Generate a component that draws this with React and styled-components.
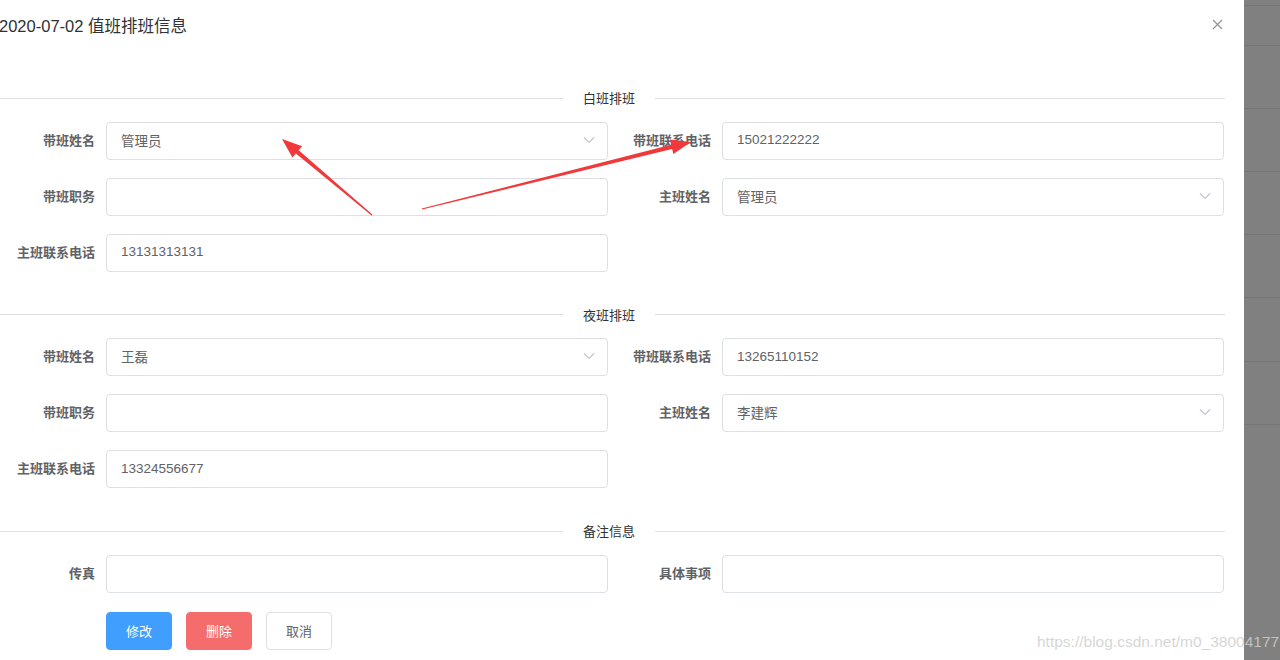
import React from "react";
import styled, { createGlobalStyle } from "styled-components";

const Global = createGlobalStyle`
  html, body { margin: 0; padding: 0; background: #fff; }
  body { font-family: "Liberation Sans", "Noto Sans CJK SC", sans-serif; }
  * { box-sizing: border-box; }
`;

const Page = styled.div`
  position: relative;
  width: 1280px;
  height: 660px;
  overflow: hidden;
  display: flex;
`;

const Dialog = styled.div`
  width: 1244px;
  flex: none;
  background: #fff;
  padding: 0 19px 0 0;
`;

const Header = styled.div`
  display: flex;
  align-items: center;
  justify-content: space-between;
  padding: 14px 0 0 0;
  margin-left: -2px;
  height: 38px;
`;

const Title = styled.div`
  font-size: 16.5px;
  line-height: 24px;
  color: #303133;
  padding-left: 1px;
`;

const Close = styled.button`
  border: 0;
  background: none;
  padding: 0;
  width: 12px;
  height: 12px;
  margin-right: 2px;
  margin-top: -4px;
  display: flex;
  align-items: center;
  justify-content: center;
  color: #909399;
`;

const Body = styled.div`
  padding-top: 36.5px;
`;

const Divider = styled.div`
  position: relative;
  height: 1px;
  background: #dcdfe6;
  margin: 23px 0;
  width: 1225px;
`;

const DividerText = styled.span`
  position: absolute;
  left: 609px;
  top: 50%;
  transform: translate(-50%, -50%);
  background: #fff;
  padding: 0 20px;
  font-size: 13px;
  line-height: 1;
  color: #303133;
  white-space: nowrap;
`;

const Grid = styled.div`
  display: grid;
  grid-template-columns: 608px 608px;
  column-gap: 8px;
  row-gap: 18px;
  padding-bottom: 19.5px;
`;

const Item = styled.div`
  display: flex;
  align-items: center;
  height: 38px;
`;

const Label = styled.label`
  width: 106px;
  flex: none;
  padding-right: 11px;
  padding-bottom: 3px;
  text-align: right;
  font-size: 13px;
  font-weight: 700;
  color: #606266;
  white-space: nowrap;
`;

const Field = styled.div`
  flex: 1;
  align-self: stretch;
  border: 1px solid #dcdfe6;
  border-radius: 4px;
  display: flex;
  align-items: center;
  justify-content: space-between;
  padding: 0 12px 2px 14px;
  font-size: 13.5px;
  color: #606266;
  background: #fff;
`;

const Buttons = styled.div`
  display: flex;
  gap: 14px;
  padding-left: 106px;
`;

const Btn = styled.button`
  width: 66px;
  height: 38px;
  border-radius: 4px;
  font-size: 13px;
  font-family: inherit;
  padding: 0 0 2px;
  border: 1px solid ${(p) => (p.$kind === "primary" ? "#409eff" : p.$kind === "danger" ? "#f56c6c" : "#dcdfe6")};
  background: ${(p) => (p.$kind === "primary" ? "#409eff" : p.$kind === "danger" ? "#f56c6c" : "#fff")};
  color: ${(p) => (p.$kind ? "#fff" : "#606266")};
`;

const Backdrop = styled.div`
  flex: 1;
  background: #808080;
  display: flex;
  flex-direction: column;
`;

const BackRow = styled.div`
  height: ${(p) => p.$h}px;
  flex: none;
  border-bottom: 1px solid #757575;
`;

const Watermark = styled.div`
  position: absolute;
  left: 1037px;
  top: 633px;
  font-size: 15.5px;
  font-family: "Liberation Sans", sans-serif;
  color: rgba(206, 206, 206, 0.85);
  white-space: nowrap;
  pointer-events: none;
`;

const Annot = styled.svg`
  position: absolute;
  left: 0;
  top: 0;
  pointer-events: none;
`;

function arrowPoints(tx, ty, hx, hy) {
  const dx = hx - tx, dy = hy - ty;
  const len = Math.hypot(dx, dy);
  const ux = dx / len, uy = dy / len;
  const nx = -uy, ny = ux;
  const bx = hx - 20 * ux, by = hy - 20 * uy;
  const p = [
    [tx + 0.6 * nx, ty + 0.6 * ny],
    [bx + 2.2 * nx, by + 2.2 * ny],
    [bx + 7.5 * nx, by + 7.5 * ny],
    [hx, hy],
    [bx - 7.5 * nx, by - 7.5 * ny],
    [bx - 2.2 * nx, by - 2.2 * ny],
    [tx - 0.6 * nx, ty - 0.6 * ny],
  ];
  return p.map((q) => q.map((v) => v.toFixed(1)).join(",")).join(" ");
}

const Chevron = () => (
  <svg width="12" height="8" viewBox="0 0 12 8">
    <path d="M1 1.5 L6 6.5 L11 1.5" fill="none" stroke="#c0c4cc" strokeWidth="1.1" />
  </svg>
);

const FormItem = ({ label, value, select }) => (
  <Item>
    <Label>{label}</Label>
    <Field>
      <span>{value}</span>
      {select && <Chevron />}
    </Field>
  </Item>
);

const Empty = () => <div />;

export default function App() {
  return (
    <Page>
      <Global />
      <Dialog>
        <Header>
          <Title>2020-07-02 值班排班信息</Title>
          <Close aria-label="close">
            <svg width="11" height="11" viewBox="0 0 11 11">
              <path d="M1 1 L10 10 M10 1 L1 10" stroke="#909399" strokeWidth="1.2" />
            </svg>
          </Close>
        </Header>
        <Body>
          <Divider><DividerText>白班排班</DividerText></Divider>
          <Grid>
            <FormItem label="带班姓名" value="管理员" select />
            <FormItem label="带班联系电话" value="15021222222" />
            <FormItem label="带班职务" value="" />
            <FormItem label="主班姓名" value="管理员" select />
            <FormItem label="主班联系电话" value="13131313131" />
            <Empty />
          </Grid>
          <Divider><DividerText>夜班排班</DividerText></Divider>
          <Grid>
            <FormItem label="带班姓名" value="王磊" select />
            <FormItem label="带班联系电话" value="13265110152" />
            <FormItem label="带班职务" value="" />
            <FormItem label="主班姓名" value="李建辉" select />
            <FormItem label="主班联系电话" value="13324556677" />
            <Empty />
          </Grid>
          <Divider><DividerText>备注信息</DividerText></Divider>
          <Grid>
            <FormItem label="传真" value="" />
            <FormItem label="具体事项" value="" />
          </Grid>
          <Buttons>
            <Btn $kind="primary">修改</Btn>
            <Btn $kind="danger">删除</Btn>
            <Btn>取消</Btn>
          </Buttons>
        </Body>
      </Dialog>
      <Backdrop>
        <BackRow $h={6} />
        <BackRow $h={40} />
        <BackRow $h={63} />
        <BackRow $h={63} />
        <BackRow $h={63} />
        <BackRow $h={63} />
        <BackRow $h={64} />
        <BackRow $h={63} />
      </Backdrop>
      <Annot width="1280" height="660" viewBox="0 0 1280 660">
        <polygon points={arrowPoints(372, 215, 282, 139)} fill="#f0393b" />
        <polygon points={arrowPoints(422, 209, 691, 142)} fill="#f0393b" />
      </Annot>
      <Watermark>https://blog.csdn.net/m0_38004177</Watermark>
    </Page>
  );
}
